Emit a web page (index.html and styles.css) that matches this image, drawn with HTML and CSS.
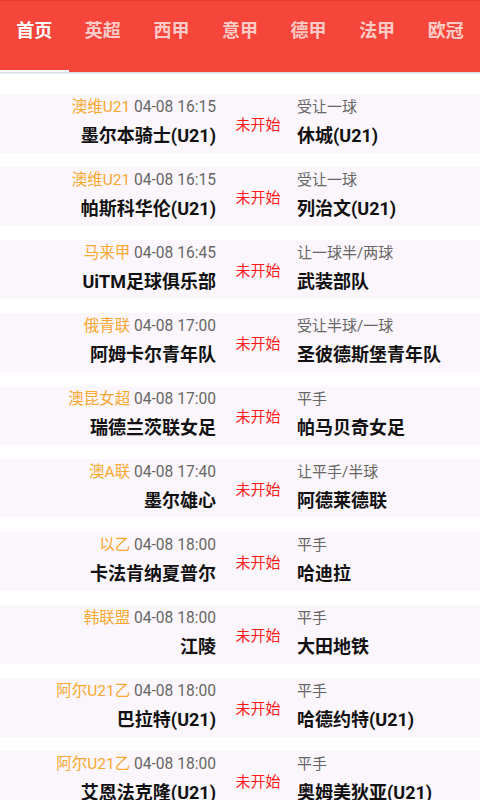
FILE: index.html
```html
<!DOCTYPE html>
<html lang="zh-CN">

<head>
  <meta charset="utf-8">
  <link rel="stylesheet" href="styles.css">
</head>

<body>
  <nav class="tabs">
    <div class="tab active">首页</div>
    <div class="tab">英超</div>
    <div class="tab">西甲</div>
    <div class="tab">意甲</div>
    <div class="tab">德甲</div>
    <div class="tab">法甲</div>
    <div class="tab">欧冠</div>
  </nav>

  <div class="list">
    <div class="match">
      <div class="home">
        <div class="meta"><span class="league">澳维U21</span> <span class="time">04-08 16:15</span></div>
        <div class="team">墨尔本骑士(U21)</div>
      </div>
      <div class="state">未开始</div>
      <div class="away">
        <div class="meta">受让一球</div>
        <div class="team">休城(U21)</div>
      </div>
    </div>

    <div class="match">
      <div class="home">
        <div class="meta"><span class="league">澳维U21</span> <span class="time">04-08 16:15</span></div>
        <div class="team">帕斯科华伦(U21)</div>
      </div>
      <div class="state">未开始</div>
      <div class="away">
        <div class="meta">受让一球</div>
        <div class="team">列治文(U21)</div>
      </div>
    </div>

    <div class="match">
      <div class="home">
        <div class="meta"><span class="league">马来甲</span> <span class="time">04-08 16:45</span></div>
        <div class="team">UiTM足球俱乐部</div>
      </div>
      <div class="state">未开始</div>
      <div class="away">
        <div class="meta">让一球半/两球</div>
        <div class="team">武装部队</div>
      </div>
    </div>

    <div class="match">
      <div class="home">
        <div class="meta"><span class="league">俄青联</span> <span class="time">04-08 17:00</span></div>
        <div class="team">阿姆卡尔青年队</div>
      </div>
      <div class="state">未开始</div>
      <div class="away">
        <div class="meta">受让半球/一球</div>
        <div class="team">圣彼德斯堡青年队</div>
      </div>
    </div>

    <div class="match">
      <div class="home">
        <div class="meta"><span class="league">澳昆女超</span> <span class="time">04-08 17:00</span></div>
        <div class="team">瑞德兰茨联女足</div>
      </div>
      <div class="state">未开始</div>
      <div class="away">
        <div class="meta">平手</div>
        <div class="team">帕马贝奇女足</div>
      </div>
    </div>

    <div class="match">
      <div class="home">
        <div class="meta"><span class="league">澳A联</span> <span class="time">04-08 17:40</span></div>
        <div class="team">墨尔雄心</div>
      </div>
      <div class="state">未开始</div>
      <div class="away">
        <div class="meta">让平手/半球</div>
        <div class="team">阿德莱德联</div>
      </div>
    </div>

    <div class="match">
      <div class="home">
        <div class="meta"><span class="league">以乙</span> <span class="time">04-08 18:00</span></div>
        <div class="team">卡法肯纳夏普尔</div>
      </div>
      <div class="state">未开始</div>
      <div class="away">
        <div class="meta">平手</div>
        <div class="team">哈迪拉</div>
      </div>
    </div>

    <div class="match">
      <div class="home">
        <div class="meta"><span class="league">韩联盟</span> <span class="time">04-08 18:00</span></div>
        <div class="team">江陵</div>
      </div>
      <div class="state">未开始</div>
      <div class="away">
        <div class="meta">平手</div>
        <div class="team">大田地铁</div>
      </div>
    </div>

    <div class="match">
      <div class="home">
        <div class="meta"><span class="league">阿尔U21乙</span> <span class="time">04-08 18:00</span></div>
        <div class="team">巴拉特(U21)</div>
      </div>
      <div class="state">未开始</div>
      <div class="away">
        <div class="meta">平手</div>
        <div class="team">哈德约特(U21)</div>
      </div>
    </div>

    <div class="match">
      <div class="home">
        <div class="meta"><span class="league">阿尔U21乙</span> <span class="time">04-08 18:00</span></div>
        <div class="team">艾恩法克隆(U21)</div>
      </div>
      <div class="state">未开始</div>
      <div class="away">
        <div class="meta">平手</div>
        <div class="team">奥姆美狄亚(U21)</div>
      </div>
    </div>
  </div>
</body>

</html>
```

FILE: styles.css
```css
:root {
  --header: #f6453b;
  --row: #fbf6fb;
  --league: #f7a830;
  --meta: #666666;
  --team: #111111;
  --state: #ff1a1a;
}

* {
  box-sizing: border-box;
  margin: 0;
  padding: 0;
}

body {
  width: 480px;
  overflow: hidden;
  font-family: Roboto, "Noto Sans CJK SC", sans-serif;
  background: #ffffff;
  color: var(--team);
}

.tabs {
  display: grid;
  grid-template-columns: repeat(7, 1fr);
  height: 72px;
  background: var(--header);
  border-top: 1px solid #e33a31;
  box-shadow: 0 1px 2px rgba(90, 120, 150, 0.35);
}

.tab {
  display: flex;
  justify-content: center;
  padding-top: 15px;
  font-family: "Noto Sans CJK SC", sans-serif;
  font-size: 18px;
  font-weight: 700;
  color: rgba(255, 255, 255, 0.72);
  border-bottom: 2px solid transparent;
}

.tab.active {
  color: #ffffff;
  border-bottom-color: #ffffff;
}

.list {
  display: flex;
  flex-direction: column;
  gap: 14px;
  padding-top: 22px;
}

.match {
  display: grid;
  grid-template-columns: 216px 81px 1fr;
  height: 59px;
  background: var(--row);
}

.meta {
  font-size: 15px;
  line-height: 24px;
  padding-top: 1px;
  color: var(--meta);
  white-space: nowrap;
}

.league {
  color: var(--league);
  font-size: 15.5px;
}

.time {
  font-size: 15.6px;
}

.team {
  font-size: 18px;
  font-weight: 700;
  line-height: 34px;
  color: var(--team);
  white-space: nowrap;
}

.home {
  text-align: right;
}

.state {
  align-self: center;
  text-align: center;
  font-size: 15px;
  color: var(--state);
  padding-left: 3px;
}

.away {
  text-align: left;
}
```
